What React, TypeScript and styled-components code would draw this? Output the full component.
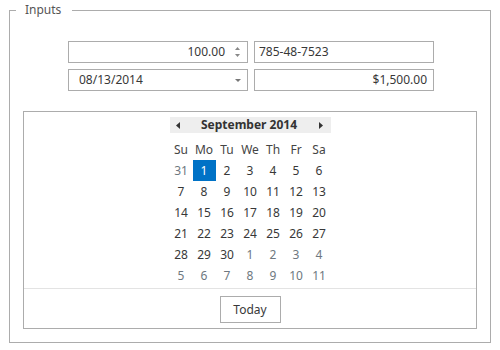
import React from 'react';
import styled, { createGlobalStyle } from 'styled-components';

const Global = createGlobalStyle`
  html, body { margin: 0; padding: 0; background: #fff; }
  body {
    font-family: "Noto Sans", "Open Sans", sans-serif;
    font-size: 12px;
    color: #383838;
  }
  * { box-sizing: border-box; }
`;

const Page = styled.div`
  width: 500px;
  height: 350px;
  padding: 0 0 0 9px;
`;

const Group = styled.fieldset`
  margin: 2px 0 0 0;
  width: 482px;
  height: 341px;
  border: 1px solid #acacac;
  padding: 0 13px 13px 13px;
  display: flex;
  flex-direction: column;
  min-width: 0;
`;

const Legend = styled.legend`
  margin-left: -7px;
  padding: 0 11px 0 9px;
  line-height: 16px;
  color: #555;
`;

const Fields = styled.div`
  margin: 23px 0 0 45px;
  display: grid;
  grid-template-columns: 180px 180px;
  grid-auto-rows: 22px;
  column-gap: 6px;
  row-gap: 6px;
`;

const Field = styled.div<{ $align?: 'left' | 'right'; $padL?: number; $padR?: number }>`
  position: relative;
  border: 1px solid #acacac;
  background: #fff;
  display: flex;
  align-items: center;
  justify-content: ${(p) => (p.$align === 'right' ? 'flex-end' : 'flex-start')};
  padding: 0 ${(p) => p.$padR ?? 6}px 0 ${(p) => p.$padL ?? 4}px;
  color: #383838;
  line-height: 20px;
`;

const Spin = styled.div`
  position: absolute;
  right: 7px;
  top: 5px;
  bottom: 5px;
  width: 5px;
  display: flex;
  flex-direction: column;
  justify-content: space-between;
`;

const Drop = styled.div`
  position: absolute;
  right: 6px;
  top: 0;
  bottom: 0;
  width: 6px;
  display: flex;
  align-items: center;
`;

const Calendar = styled.div`
  margin-top: 20px;
  width: 454px;
  height: 218px;
  border: 1px solid #acacac;
  display: flex;
  flex-direction: column;
  align-items: center;
  padding-top: 5px;
`;

const Header = styled.div`
  width: 161px;
  height: 16px;
  background: #eeeeee;
  display: flex;
  align-items: center;
  justify-content: space-between;
  padding: 0 8px 0 6px;
`;

const Title = styled.span`
  font-weight: bold;
  color: #333;
  line-height: 16px;
`;

const Grid = styled.div`
  margin-top: 6px;
  display: grid;
  grid-template-columns: repeat(7, 23px);
  grid-auto-rows: 21px;
`;

const DayName = styled.div`
  display: flex;
  align-items: center;
  justify-content: center;
  color: #444;
`;

const DayCell = styled.div<{ $other?: boolean; $selected?: boolean }>`
  display: flex;
  align-items: center;
  justify-content: center;
  color: ${(p) => (p.$selected ? '#fff' : p.$other ? '#6e7880' : '#383838')};
  background: ${(p) => (p.$selected ? '#0072c6' : 'transparent')};
`;

const Footer = styled.div`
  margin-top: 2px;
  align-self: stretch;
  flex: 1;
  border-top: 1px solid #e3e3e3;
  display: flex;
  justify-content: center;
  padding-top: 7px;
`;

const TodayButton = styled.button`
  width: 61px;
  height: 27px;
  border: 1px solid #acacac;
  background: #fff;
  font-family: inherit;
  font-size: 12px;
  color: #383838;
  padding: 0;
`;

const Tri = ({ dir, w, h, color }: { dir: 'up' | 'down' | 'left' | 'right'; w: number; h: number; color: string }) => {
  const pts: Record<string, string> = {
    up: `0,${h} ${w / 2},0 ${w},${h}`,
    down: `0,0 ${w},0 ${w / 2},${h}`,
    left: `${w},0 ${w},${h} 0,${h / 2}`,
    right: `0,0 0,${h} ${w},${h / 2}`,
  };
  return (
    <svg width={w} height={h} viewBox={`0 0 ${w} ${h}`}>
      <polygon points={pts[dir]} fill={color} />
    </svg>
  );
};

const names = ['Su', 'Mo', 'Tu', 'We', 'Th', 'Fr', 'Sa'];

type Day = { n: number; other?: boolean; sel?: boolean };
const days: Day[] = [
  { n: 31, other: true },
  ...Array.from({ length: 30 }, (_, i) => ({ n: i + 1, sel: i === 0 })),
  ...Array.from({ length: 11 }, (_, i) => ({ n: i + 1, other: true })),
];

export default function App() {
  return (
    <Page>
      <Global />
      <Group>
        <Legend>Inputs</Legend>
        <Fields>
          <Field $align="right" $padR={22}>
            100.00
            <Spin>
              <Tri dir="up" w={5} h={3} color="#888" />
              <Tri dir="down" w={5} h={3} color="#888" />
            </Spin>
          </Field>
          <Field $align="left" $padL={4}>785-48-7523</Field>
          <Field $align="left" $padL={10}>
            08/13/2014
            <Drop>
              <Tri dir="down" w={6} h={3} color="#777" />
            </Drop>
          </Field>
          <Field $align="right" $padR={6}>$1,500.00</Field>
        </Fields>
        <Calendar>
          <Header>
            <Tri dir="left" w={4} h={7} color="#333" />
            <Title>September 2014</Title>
            <Tri dir="right" w={4} h={7} color="#333" />
          </Header>
          <Grid>
            {names.map((n) => (
              <DayName key={n}>{n}</DayName>
            ))}
            {days.map((d, i) => (
              <DayCell key={i} $other={d.other} $selected={d.sel}>
                {d.n}
              </DayCell>
            ))}
          </Grid>
          <Footer>
            <TodayButton>Today</TodayButton>
          </Footer>
        </Calendar>
      </Group>
    </Page>
  );
}
